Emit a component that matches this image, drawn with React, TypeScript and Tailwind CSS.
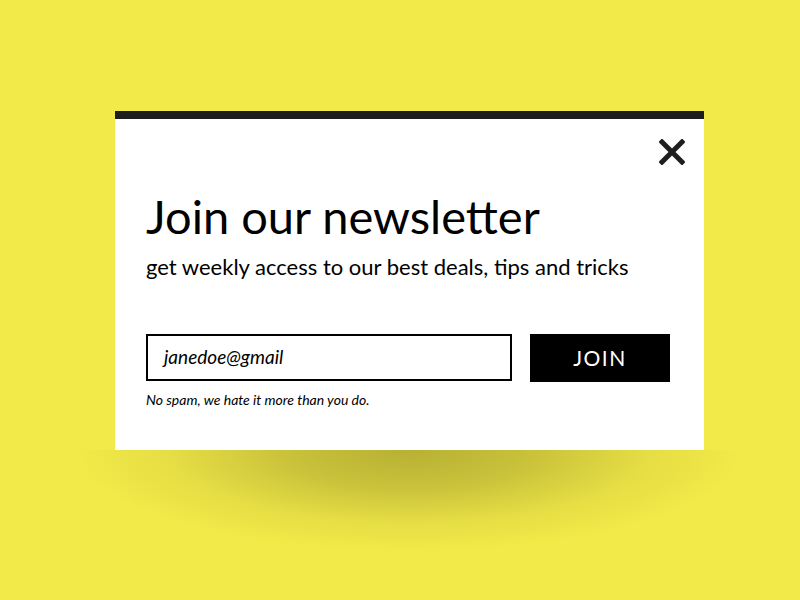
import React from "react";

const font = { fontFamily: "Lato, 'Noto Sans', sans-serif" };

export default function App() {
  return (
    <div className="w-[800px] h-[600px] bg-[#f2ea48] pt-[111px] pl-[115px] overflow-hidden" style={font}>
      <div className="relative w-[589px]">
        {/* soft floor shadow below the card */}
        <div className="absolute left-[-60px] top-[339px] w-[709px] h-[115px] bg-[radial-gradient(ellipse_47%_88%_at_50%_0%,rgba(30,28,0,0.28),rgba(30,28,0,0.2)_35%,rgba(30,28,0,0.06)_72%,transparent_100%)]" />
        <div className="relative bg-white h-[339px] flex flex-col">
          <div className="h-[8px] bg-[#1e1e1e]" />
          <div className="flex justify-end pr-[19px] pt-[20px]">
            <svg width="26" height="26" viewBox="0 0 26 26">
              <path d="M3 3 L23 23 M23 3 L3 23" stroke="#1e1e1e" strokeWidth="5" strokeLinecap="square" />
            </svg>
          </div>
          <div className="pl-[31px]">
            <h1 className="text-[47px] leading-none text-black mt-[28px]">Join our newsletter</h1>
            <p className="text-[22px] leading-none text-black mt-[16px]">get weekly access to our best deals, tips and tricks</p>
            <div className="flex mt-[56px] gap-[18px]">
              <div className="w-[366px] h-[47px] border-2 border-black flex items-center pl-[16px]">
                <span className="italic text-[19px] text-black">janedoe@gmail</span>
              </div>
              <button className="w-[140px] h-[48px] bg-black text-white text-[21px] tracking-[1.5px] flex items-center justify-center">JOIN</button>
            </div>
            <p className="italic text-[14px] text-black mt-[7px]">No spam, we hate it more than you do.</p>
          </div>
        </div>
      </div>
    </div>
  );
}
